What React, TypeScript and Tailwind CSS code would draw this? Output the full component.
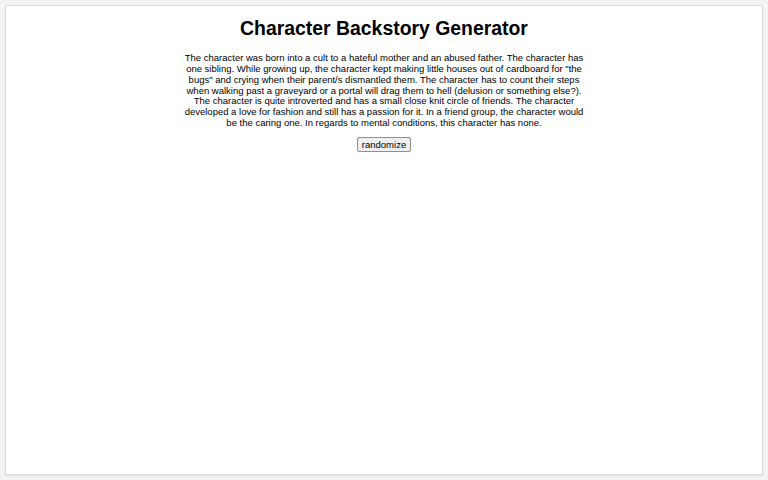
export default function App() {
  return (
    <div className="min-h-screen w-full bg-[#f3f3f3] p-[5px] font-['Liberation_Sans',Arial,sans-serif] text-black">
      <div className="flex h-[470px] flex-col items-center rounded-[2px] border border-[#dcdcdc] bg-white shadow-[0_1px_2px_rgba(0,0,0,0.08)]">
        <h1 className="mt-[10px] text-[19.4px] font-bold leading-[24px]">Character Backstory Generator</h1>
        <p className="mt-[13px] w-[404px] text-center text-[9.5px] leading-[10.85px]">
          The character was born into a cult to a hateful mother and an abused father. The character has one sibling. While growing up, the character kept making little houses out of cardboard for "the bugs" and crying when their parent/s dismantled them. The character has to count their steps when walking past a graveyard or a portal will drag them to hell (delusion or something else?). The character is quite introverted and has a small close knit circle of friends. The character developed a love for fashion and still has a passion for it. In a friend group, the character would be the caring one. In regards to mental conditions, this character has none.
        </p>
        <button className="mt-[8px] rounded-[2px] border border-[#8f8f8f] bg-[#efefef] px-[4px] py-[1px] text-[9.5px] leading-[11px]">
          randomize
        </button>
      </div>
    </div>
  );
}
